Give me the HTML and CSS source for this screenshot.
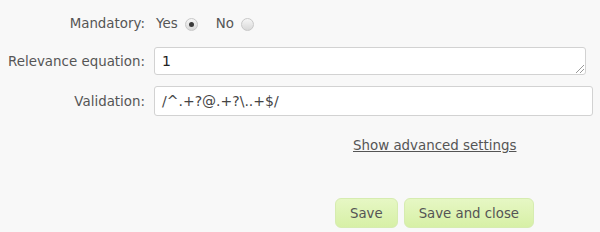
FILE: index.html
```html
<!DOCTYPE html>
<html lang="en">
<head>
    <meta charset="UTF-8">
    <title>Question settings</title>
    <link rel="stylesheet" href="styles.css">
</head>
<body>
    <div class="settings">
        <div class="row row-radio">
            <label class="label">Mandatory:</label>
            <div class="options">
                <span class="option">Yes <span class="radio checked"></span></span>
                <span class="option">No <span class="radio"></span></span>
            </div>
        </div>
        <div class="row row-area">
            <label class="label">Relevance equation:</label>
            <div class="field area">1<span class="grip"></span></div>
        </div>
        <div class="row row-input">
            <label class="label">Validation:</label>
            <div class="field text">/^.+?@.+?\..+$/</div>
        </div>
        <div class="advanced"><a href="#">Show advanced settings</a></div>
        <div class="actions">
            <button class="btn">Save</button>
            <button class="btn">Save and close</button>
        </div>
    </div>
</body>
</html>
```

FILE: styles.css
```css
body {
    margin: 0;
    background: #f8f8f8;
    font-family: "DejaVu Sans", Verdana, sans-serif;
    font-size: 13.4px;
    color: #555;
}
.settings {
    width: 600px;
    height: 232px;
    padding-top: 12px;
    box-sizing: border-box;
}
.row {
    display: grid;
    grid-template-columns: 145px auto;
    column-gap: 9px;
    align-items: center;
    justify-items: start;
}
.label {
    justify-self: end;
}
.row-radio {
    height: 22px;
}
.row-area {
    margin-top: 13px;
}
.row-input {
    margin-top: 11px;
}
.options {
    display: flex;
    gap: 18px;
    padding-left: 2px;
}
.option {
    display: flex;
    align-items: center;
    gap: 7px;
}
.radio {
    width: 11px;
    height: 11px;
    border: 1px solid #c8c8c8;
    border-radius: 50%;
    background: linear-gradient(#f6f6f6, #d8d8d8);
    margin-top: 3px;
    position: relative;
}
.radio.checked::after {
    content: "";
    position: absolute;
    left: 3px;
    top: 3px;
    width: 5px;
    height: 5px;
    border-radius: 50%;
    background: #3a3a3a;
}
.field {
    background: #fff;
    border: 1px solid #d2d2d2;
    border-radius: 3px;
    box-sizing: border-box;
    padding: 0 7px;
    color: #222;
    display: flex;
    align-items: center;
    font-size: 14px;
}
.area {
    width: 432px;
    height: 28px;
    position: relative;
}
.grip {
    position: absolute;
    right: 1px;
    bottom: 1px;
    width: 8px;
    height: 8px;
    background: linear-gradient(135deg, transparent 45%, #999 45%, #999 52%, transparent 52%, transparent 70%, #999 70%, #999 77%, transparent 77%);
}
.text {
    width: 439px;
    height: 30px;
    color: #444;
}
.advanced {
    margin-top: 22px;
    padding-left: 353px;
}
.advanced a {
    color: #555;
}
.actions {
    margin-top: 45px;
    display: flex;
    gap: 6px;
    padding-left: 335px;
}
.btn {
    font-family: "DejaVu Sans", Verdana, sans-serif;
    font-size: 13.3px;
    color: #555;
    height: 30px;
    padding: 0 14px;
    border: 1px solid #d6ecb0;
    border-radius: 6px;
    background: linear-gradient(#e6f7c4, #d7f0a6);
}
```
